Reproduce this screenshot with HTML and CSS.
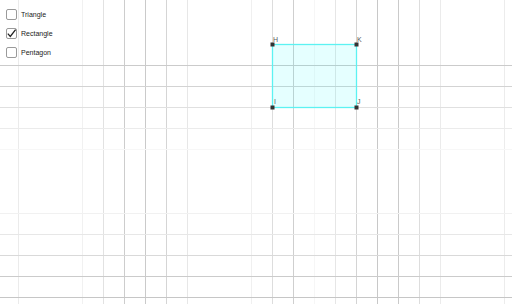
FILE: index.html
```html
<!DOCTYPE html>
<html>
<head>
<meta charset="utf-8">
<link rel="stylesheet" href="styles.css">
</head>
<body>
<div class="app">
  <svg class="canvas" width="512" height="304" viewBox="0 0 512 304" xmlns="http://www.w3.org/2000/svg">
    <g stroke-width="1" fill="none">
      <line x1="18.5" y1="0" x2="18.5" y2="304" stroke="#ebebeb"/>
      <line x1="82.5" y1="0" x2="82.5" y2="304" stroke="#f1f1f1"/>
      <line x1="103.5" y1="0" x2="103.5" y2="304" stroke="#e2e2e2"/>
      <line x1="124.5" y1="0" x2="124.5" y2="304" stroke="#cdcdcd"/>
      <line x1="145.5" y1="0" x2="145.5" y2="304" stroke="#cacaca"/>
      <line x1="166.5" y1="0" x2="166.5" y2="304" stroke="#d5d5d5"/>
      <line x1="187.5" y1="0" x2="187.5" y2="304" stroke="#e7e7e7"/>
      <line x1="251.5" y1="0" x2="251.5" y2="304" stroke="#f0f0f0"/>
      <line x1="272.5" y1="0" x2="272.5" y2="304" stroke="#dddddd"/>
      <line x1="293.5" y1="0" x2="293.5" y2="304" stroke="#cfcfcf"/>
      <line x1="314.5" y1="0" x2="314.5" y2="304" stroke="#f6f6f6"/>
      <line x1="335.5" y1="0" x2="335.5" y2="304" stroke="#e6e6e6"/>
      <line x1="356.5" y1="0" x2="356.5" y2="304" stroke="#d4d4d4"/>
      <line x1="377.5" y1="0" x2="377.5" y2="304" stroke="#c8c8c8"/>
      <line x1="398.5" y1="0" x2="398.5" y2="304" stroke="#cacaca"/>
      <line x1="419.5" y1="0" x2="419.5" y2="304" stroke="#dddddd"/>
      <line x1="440.5" y1="0" x2="440.5" y2="304" stroke="#ebebeb"/>
      <line x1="504.5" y1="0" x2="504.5" y2="304" stroke="#ececec"/>

      <line x1="0" y1="65.5" x2="512" y2="65.5" stroke="#cbcbcb"/>
      <line x1="0" y1="86.5" x2="512" y2="86.5" stroke="#d3d3d3"/>
      <line x1="0" y1="107.5" x2="512" y2="107.5" stroke="#e0e0e0"/>
      <line x1="0" y1="128.5" x2="512" y2="128.5" stroke="#ebebeb"/>
      <line x1="0" y1="149.5" x2="512" y2="149.5" stroke="#f7f7f7"/>
      <line x1="0" y1="213.5" x2="512" y2="213.5" stroke="#f1f1f1"/>
      <line x1="0" y1="234.5" x2="512" y2="234.5" stroke="#e7e7e7"/>
      <line x1="0" y1="255.5" x2="512" y2="255.5" stroke="#d9d9d9"/>
      <line x1="0" y1="276.5" x2="512" y2="276.5" stroke="#cbcbcb"/>
      <line x1="0" y1="297.5" x2="512" y2="297.5" stroke="#c6c6c6"/>
    </g>
    <rect x="272.5" y="44.5" width="84" height="63" fill="rgba(0,255,255,0.1)" stroke="#5cf2f2" stroke-width="1.3"/>
    <g fill="#333333">
      <rect x="270.5" y="42.5" width="4" height="4"/>
      <rect x="354.5" y="42.5" width="4" height="4"/>
      <rect x="270.5" y="105.5" width="4" height="4"/>
      <rect x="354.5" y="105.5" width="4" height="4"/>
    </g>
    <g class="plabel" fill="#5a5a5a">
      <text x="273" y="42">H</text>
      <text x="357" y="42">K</text>
      <text x="274" y="104">I</text>
      <text x="357" y="104">J</text>
    </g>
  </svg>
  <div class="panel">
    <label class="item"><span class="box"></span><span class="txt">Triangle</span></label>
    <label class="item"><span class="box"><svg width="11" height="11" viewBox="0 0 11 11"><path d="M1.8 5.6 L4.3 8.4 L9.6 1.6" fill="none" stroke="#222" stroke-width="1.3"/></svg></span><span class="txt">Rectangle</span></label>
    <label class="item"><span class="box"></span><span class="txt">Pentagon</span></label>
  </div>
</div>
</body>
</html>
```
FILE: styles.css
```css
html, body {
  margin: 0;
  padding: 0;
  background: #ffffff;
}
.app {
  position: relative;
  width: 512px;
  height: 304px;
  overflow: hidden;
  font-family: "Liberation Sans", Arial, sans-serif;
}
.canvas {
  display: block;
}
.plabel {
  font-family: "Liberation Sans", Arial, sans-serif;
  font-size: 7px;
}
.panel {
  position: absolute;
  left: 6px;
  top: 9px;
  display: flex;
  flex-direction: column;
  gap: 8px;
}
.item {
  display: flex;
  align-items: center;
  gap: 4px;
  height: 11px;
}
.box {
  box-sizing: border-box;
  width: 11px;
  height: 11px;
  border: 1px solid #9a9a9a;
  border-radius: 2px;
  background: #fff;
  display: flex;
}
.box svg {
  display: block;
  margin: -1px;
}
.txt {
  font-size: 7px;
  color: #222;
  line-height: 11px;
}
```
